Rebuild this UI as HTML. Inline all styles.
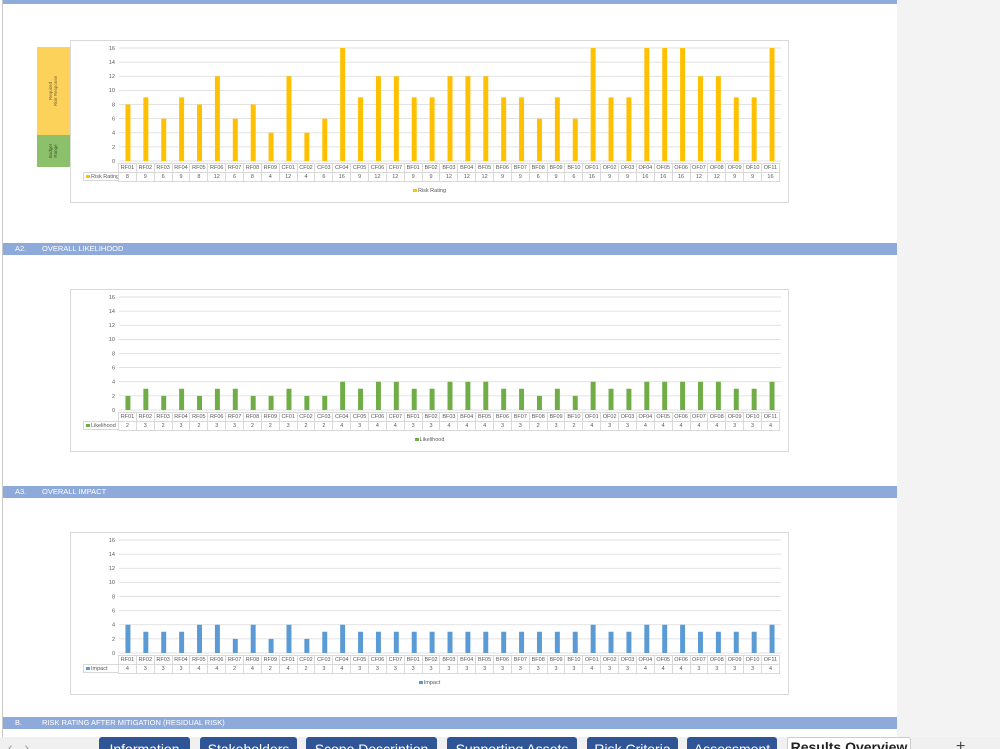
<!DOCTYPE html>
<html><head><meta charset="utf-8"><style>
*{margin:0;padding:0;box-sizing:border-box}
body{width:1000px;height:749px;overflow:hidden;background:#fff;font-family:"Liberation Sans",sans-serif;position:relative}
.right{position:absolute;left:897px;top:0;width:103px;height:737px;background:#f3f3f3}
.lline{position:absolute;left:2px;top:0;width:1px;height:737px;background:#c8c8c8}
.bar{position:absolute;left:3px;width:894px;height:12px;background:#8eaadb;color:#fff;font-size:7.5px;line-height:12px;padding-left:12px}
.bar span{display:inline-block;width:27px}
.chart{position:absolute;left:70px;width:719px;height:163px;border:1px solid #d9d9d9;background:#fff}
.chart svg{position:absolute;left:0;top:0}
table{position:absolute;border-collapse:collapse;table-layout:fixed;font-size:5.5px;color:#595959;text-align:center}
td{border:1px solid #d9d9d9;height:9px;padding:0;line-height:8px;white-space:nowrap;overflow:hidden}
.t{left:47px;top:122px;width:662px}
.leg{position:absolute;left:12px;top:131px;width:36px;height:9px;border:1px solid #d9d9d9;font-size:5.5px;color:#595959;line-height:8px;padding-left:2px;white-space:nowrap;overflow:hidden}
.leg i,.lg i{display:inline-block;width:4px;height:3px;margin-right:1px;vertical-align:middle}
.lg{position:absolute;top:147px;width:100%;text-align:center;font-size:5.5px;color:#595959}
.tabs{position:absolute;left:0;top:737px;width:1000px;height:12px;background:#f0f0f0;overflow:hidden}
.tab{position:absolute;top:0;height:14px;background:#2f5597;color:#fff;font-size:14px;line-height:24px;text-align:center;border-radius:3px 3px 0 0;overflow:hidden;white-space:nowrap}
</style></head><body>
<div class="right"></div><div class="lline"></div>
<div class="bar" style="top:0;height:4px"></div>
<div class="bar" style="top:243px"><span>A2.</span>OVERALL LIKELIHOOD</div>
<div class="bar" style="top:486px"><span>A3.</span>OVERALL IMPACT</div>
<div class="bar" style="top:717px"><span>B.</span>RISK RATING AFTER MITIGATION (RESIDUAL RISK)</div>

<div style="position:absolute;left:37px;top:47px;width:33px;height:88px;background:#fcd25a;color:#7a6a3a;font-size:4.5px;display:flex;align-items:center;justify-content:center"><div style="transform:rotate(-90deg);white-space:nowrap;text-align:center">Required<br>Risk Response</div></div>
<div style="position:absolute;left:37px;top:135px;width:33px;height:32px;background:#8dc06b;color:#3a5a2a;font-size:4.5px;display:flex;align-items:center;justify-content:center"><div style="transform:rotate(-90deg);white-space:nowrap;text-align:center">Budget<br>Range</div></div>

<!-- CHART 1 -->
<div class="chart" style="top:40px">
<svg width="719" height="163">
<g stroke="#d9d9d9" stroke-width="0.7"><path d="M48 7H710M48 21.1H710M48 35.25H710M48 49.4H710M48 63.5H710M48 77.6H710M48 91.75H710M48 105.9H710M48 120H710"/></g>
<g font-size="5.5" fill="#595959" text-anchor="end"><text x="44" y="9">16</text><text x="44" y="23">14</text><text x="44" y="37">12</text><text x="44" y="51">10</text><text x="44" y="65.5">8</text><text x="44" y="79.5">6</text><text x="44" y="93.5">4</text><text x="44" y="108">2</text><text x="44" y="122">0</text></g>
<svg x="48" y="0" width="662" height="163" viewBox="0 0 666 163" preserveAspectRatio="none">
<path fill="#ffc000" d="M6.5 63.5h5V120h-5zM24.5 56.4h5V120h-5zM42.5 77.6h5V120h-5zM60.5 56.4h5V120h-5zM78.5 63.5h5V120h-5zM96.5 35.25h5V120h-5zM114.5 77.6h5V120h-5zM132.5 63.5h5V120h-5zM150.5 91.75h5V120h-5zM168.5 35.25h5V120h-5zM186.5 91.75h5V120h-5zM204.5 77.6h5V120h-5zM222.5 7h5V120h-5zM240.5 56.4h5V120h-5zM258.5 35.25h5V120h-5zM276.5 35.25h5V120h-5zM294.5 56.4h5V120h-5zM312.5 56.4h5V120h-5zM330.5 35.25h5V120h-5zM348.5 35.25h5V120h-5zM366.5 35.25h5V120h-5zM384.5 56.4h5V120h-5zM402.5 56.4h5V120h-5zM420.5 77.6h5V120h-5zM438.5 56.4h5V120h-5zM456.5 77.6h5V120h-5zM474.5 7h5V120h-5zM492.5 56.4h5V120h-5zM510.5 56.4h5V120h-5zM528.5 7h5V120h-5zM546.5 7h5V120h-5zM564.5 7h5V120h-5zM582.5 35.25h5V120h-5zM600.5 35.25h5V120h-5zM618.5 56.4h5V120h-5zM636.5 56.4h5V120h-5zM654.5 7h5V120h-5z"/>
</svg></svg>
<table class="t"><tr><td>RF01</td><td>RF02</td><td>RF03</td><td>RF04</td><td>RF05</td><td>RF06</td><td>RF07</td><td>RF08</td><td>RF09</td><td>CF01</td><td>CF02</td><td>CF03</td><td>CF04</td><td>CF05</td><td>CF06</td><td>CF07</td><td>BF01</td><td>BF02</td><td>BF03</td><td>BF04</td><td>BF05</td><td>BF06</td><td>BF07</td><td>BF08</td><td>BF09</td><td>BF10</td><td>OF01</td><td>OF02</td><td>OF03</td><td>OF04</td><td>OF05</td><td>OF06</td><td>OF07</td><td>OF08</td><td>OF09</td><td>OF10</td><td>OF11</td></tr>
<tr><td>8</td><td>9</td><td>6</td><td>9</td><td>8</td><td>12</td><td>6</td><td>8</td><td>4</td><td>12</td><td>4</td><td>6</td><td>16</td><td>9</td><td>12</td><td>12</td><td>9</td><td>9</td><td>12</td><td>12</td><td>12</td><td>9</td><td>9</td><td>6</td><td>9</td><td>6</td><td>16</td><td>9</td><td>9</td><td>16</td><td>16</td><td>16</td><td>12</td><td>12</td><td>9</td><td>9</td><td>16</td></tr></table>
<div class="leg"><i style="background:#ffc000"></i>Risk Rating</div>
<div class="lg"><i style="background:#ffc000"></i>Risk Rating</div>
</div>

<!-- CHART 2 -->
<div class="chart" style="top:289px">
<svg width="719" height="163">
<g stroke="#d9d9d9" stroke-width="0.7"><path d="M48 7H710M48 21.1H710M48 35.25H710M48 49.4H710M48 63.5H710M48 77.6H710M48 91.75H710M48 105.9H710M48 120H710"/></g>
<g font-size="5.5" fill="#595959" text-anchor="end"><text x="44" y="9">16</text><text x="44" y="23">14</text><text x="44" y="37">12</text><text x="44" y="51">10</text><text x="44" y="65.5">8</text><text x="44" y="79.5">6</text><text x="44" y="93.5">4</text><text x="44" y="108">2</text><text x="44" y="122">0</text></g>
<svg x="48" y="0" width="662" height="163" viewBox="0 0 666 163" preserveAspectRatio="none">
<path fill="#70ad47" d="M6.5 105.9h5V120h-5zM24.5 98.8h5V120h-5zM42.5 105.9h5V120h-5zM60.5 98.8h5V120h-5zM78.5 105.9h5V120h-5zM96.5 98.8h5V120h-5zM114.5 98.8h5V120h-5zM132.5 105.9h5V120h-5zM150.5 105.9h5V120h-5zM168.5 98.8h5V120h-5zM186.5 105.9h5V120h-5zM204.5 105.9h5V120h-5zM222.5 91.75h5V120h-5zM240.5 98.8h5V120h-5zM258.5 91.75h5V120h-5zM276.5 91.75h5V120h-5zM294.5 98.8h5V120h-5zM312.5 98.8h5V120h-5zM330.5 91.75h5V120h-5zM348.5 91.75h5V120h-5zM366.5 91.75h5V120h-5zM384.5 98.8h5V120h-5zM402.5 98.8h5V120h-5zM420.5 105.9h5V120h-5zM438.5 98.8h5V120h-5zM456.5 105.9h5V120h-5zM474.5 91.75h5V120h-5zM492.5 98.8h5V120h-5zM510.5 98.8h5V120h-5zM528.5 91.75h5V120h-5zM546.5 91.75h5V120h-5zM564.5 91.75h5V120h-5zM582.5 91.75h5V120h-5zM600.5 91.75h5V120h-5zM618.5 98.8h5V120h-5zM636.5 98.8h5V120h-5zM654.5 91.75h5V120h-5z"/>
</svg></svg>
<table class="t"><tr><td>RF01</td><td>RF02</td><td>RF03</td><td>RF04</td><td>RF05</td><td>RF06</td><td>RF07</td><td>RF08</td><td>RF09</td><td>CF01</td><td>CF02</td><td>CF03</td><td>CF04</td><td>CF05</td><td>CF06</td><td>CF07</td><td>BF01</td><td>BF02</td><td>BF03</td><td>BF04</td><td>BF05</td><td>BF06</td><td>BF07</td><td>BF08</td><td>BF09</td><td>BF10</td><td>OF01</td><td>OF02</td><td>OF03</td><td>OF04</td><td>OF05</td><td>OF06</td><td>OF07</td><td>OF08</td><td>OF09</td><td>OF10</td><td>OF11</td></tr>
<tr><td>2</td><td>3</td><td>2</td><td>3</td><td>2</td><td>3</td><td>3</td><td>2</td><td>2</td><td>3</td><td>2</td><td>2</td><td>4</td><td>3</td><td>4</td><td>4</td><td>3</td><td>3</td><td>4</td><td>4</td><td>4</td><td>3</td><td>3</td><td>2</td><td>3</td><td>2</td><td>4</td><td>3</td><td>3</td><td>4</td><td>4</td><td>4</td><td>4</td><td>4</td><td>3</td><td>3</td><td>4</td></tr></table>
<div class="leg"><i style="background:#70ad47"></i>Likelihood</div>
<div class="lg"><i style="background:#70ad47"></i>Likelihood</div>
</div>

<!-- CHART 3 -->
<div class="chart" style="top:532px">
<svg width="719" height="163">
<g stroke="#d9d9d9" stroke-width="0.7"><path d="M48 7H710M48 21.1H710M48 35.25H710M48 49.4H710M48 63.5H710M48 77.6H710M48 91.75H710M48 105.9H710M48 120H710"/></g>
<g font-size="5.5" fill="#595959" text-anchor="end"><text x="44" y="9">16</text><text x="44" y="23">14</text><text x="44" y="37">12</text><text x="44" y="51">10</text><text x="44" y="65.5">8</text><text x="44" y="79.5">6</text><text x="44" y="93.5">4</text><text x="44" y="108">2</text><text x="44" y="122">0</text></g>
<svg x="48" y="0" width="662" height="163" viewBox="0 0 666 163" preserveAspectRatio="none">
<path fill="#5b9bd5" d="M6.5 91.75h5V120h-5zM24.5 98.8h5V120h-5zM42.5 98.8h5V120h-5zM60.5 98.8h5V120h-5zM78.5 91.75h5V120h-5zM96.5 91.75h5V120h-5zM114.5 105.9h5V120h-5zM132.5 91.75h5V120h-5zM150.5 105.9h5V120h-5zM168.5 91.75h5V120h-5zM186.5 105.9h5V120h-5zM204.5 98.8h5V120h-5zM222.5 91.75h5V120h-5zM240.5 98.8h5V120h-5zM258.5 98.8h5V120h-5zM276.5 98.8h5V120h-5zM294.5 98.8h5V120h-5zM312.5 98.8h5V120h-5zM330.5 98.8h5V120h-5zM348.5 98.8h5V120h-5zM366.5 98.8h5V120h-5zM384.5 98.8h5V120h-5zM402.5 98.8h5V120h-5zM420.5 98.8h5V120h-5zM438.5 98.8h5V120h-5zM456.5 98.8h5V120h-5zM474.5 91.75h5V120h-5zM492.5 98.8h5V120h-5zM510.5 98.8h5V120h-5zM528.5 91.75h5V120h-5zM546.5 91.75h5V120h-5zM564.5 91.75h5V120h-5zM582.5 98.8h5V120h-5zM600.5 98.8h5V120h-5zM618.5 98.8h5V120h-5zM636.5 98.8h5V120h-5zM654.5 91.75h5V120h-5z"/>
</svg></svg>
<table class="t"><tr><td>RF01</td><td>RF02</td><td>RF03</td><td>RF04</td><td>RF05</td><td>RF06</td><td>RF07</td><td>RF08</td><td>RF09</td><td>CF01</td><td>CF02</td><td>CF03</td><td>CF04</td><td>CF05</td><td>CF06</td><td>CF07</td><td>BF01</td><td>BF02</td><td>BF03</td><td>BF04</td><td>BF05</td><td>BF06</td><td>BF07</td><td>BF08</td><td>BF09</td><td>BF10</td><td>OF01</td><td>OF02</td><td>OF03</td><td>OF04</td><td>OF05</td><td>OF06</td><td>OF07</td><td>OF08</td><td>OF09</td><td>OF10</td><td>OF11</td></tr>
<tr><td>4</td><td>3</td><td>3</td><td>3</td><td>4</td><td>4</td><td>2</td><td>4</td><td>2</td><td>4</td><td>2</td><td>3</td><td>4</td><td>3</td><td>3</td><td>3</td><td>3</td><td>3</td><td>3</td><td>3</td><td>3</td><td>3</td><td>3</td><td>3</td><td>3</td><td>3</td><td>4</td><td>3</td><td>3</td><td>4</td><td>4</td><td>4</td><td>3</td><td>3</td><td>3</td><td>3</td><td>4</td></tr></table>
<div class="leg"><i style="background:#5b9bd5"></i>Impact</div>
<div class="lg"><i style="background:#5b9bd5"></i>Impact</div>
</div>

<div class="tabs">
<div style="position:absolute;left:8px;top:2px;font-size:14px;color:#999;line-height:16px">‹&nbsp;&nbsp;&nbsp;›</div>
<div class="tab" style="left:99px;width:91px">Information</div>
<div class="tab" style="left:200px;width:97px">Stakeholders</div>
<div class="tab" style="left:306px;width:131px">Scope Description</div>
<div class="tab" style="left:447px;width:130px">Supporting Assets</div>
<div class="tab" style="left:587px;width:91px">Risk Criteria</div>
<div class="tab" style="left:687px;width:90px">Assessment</div>
<div class="tab" style="left:787px;width:124px;background:#fff;color:#222;font-weight:bold;border:1px solid #ccc;border-bottom:none;line-height:18px">Results Overview</div>
<div style="position:absolute;left:956px;top:2px;font-size:16px;color:#444;line-height:16px">+</div>
</div>
</body></html>
